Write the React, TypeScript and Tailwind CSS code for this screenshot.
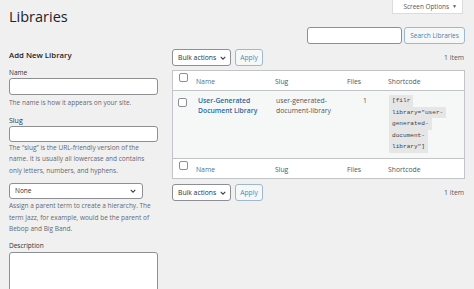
import React from "react";

function Checkbox() {
  return <div className="w-[9px] h-[9px] bg-white border border-[#8c8f94] rounded-[2px]" />;
}

function Chevron() {
  return (
    <svg width="6" height="4" viewBox="0 0 6 4" className="shrink-0">
      <path d="M0.7 0.8 L3 3.1 L5.3 0.8" fill="none" stroke="#3c434a" strokeWidth="1.1" />
    </svg>
  );
}

function BulkRow() {
  return (
    <div className="flex items-center h-[17px]">
      <div className="h-[17px] w-[59px] bg-white border border-[#8c8f94] rounded-[3px] flex items-center pl-[5px] pr-[4px] justify-between text-[#2c3338]">
        <span>Bulk actions</span>
        <Chevron />
      </div>
      <div className="ml-[4px] h-[17px] w-[28px] bg-[#f6f7f7] border border-[#9db8d0] rounded-[3px] flex items-center justify-center text-[#5b89b3]">
        Apply
      </div>
      <div className="ml-auto text-[#50575e] pr-[1px]">1 item</div>
    </div>
  );
}

function HeaderRow({ top }: { top: boolean }) {
  return (
    <div
      className={
        "grid grid-cols-[20px_79px_72px_41px_1fr] h-[20px] bg-white " +
        (top ? "border-b border-[#c3c4c7]" : "border-t border-[#c3c4c7]")
      }
    >
      <div className="pl-[6px] pt-[2px]">
        <Checkbox />
      </div>
      <div className="pl-[3px] flex items-center pt-[2px] text-[#4f6f8f]">Name</div>
      <div className="pl-[3px] flex items-center pt-[2px] text-[#50575e]">Slug</div>
      <div className="pl-[3px] flex items-center pt-[2px] text-[#50575e]">Files</div>
      <div className="pl-[3px] flex items-center pt-[2px] text-[#50575e]">Shortcode</div>
    </div>
  );
}

export default function App() {
  const code = ['[filr', 'library="user-', "generated-", "document-", 'library"]'];
  return (
    <div className="w-[474px] h-[289px] overflow-hidden relative bg-[#f0f0f1] font-['Open_Sans',sans-serif] text-[6.8px] leading-[11.5px] text-[#3c434a]">
      <div className="absolute top-0 right-[11px] w-[71px] h-[14px] bg-white border border-t-0 border-[#dcdcde] flex items-center justify-end pr-[5px] gap-[3px] text-[6.4px] text-[#50575e]">
        <span>Screen Options</span>
        <span className="text-[5px]">▼</span>
      </div>

      <div className="px-[9px]">
        <h1 className="pt-[9px] text-[14.5px] leading-[16px] text-[#1d2327] font-normal">Libraries</h1>

        <div className="flex justify-end mt-[2px] h-[17px]">
          <div className="w-[95px] h-[17px] bg-white border border-[#8c8f94] rounded-[3px]" />
          <div className="ml-[2px] w-[61px] h-[17px] bg-[#f6f7f7] border border-[#9db8d0] rounded-[3px] flex items-center justify-center text-[6.5px] text-[#4d7fab]">
            Search Libraries
          </div>
        </div>

        <div className="flex gap-[14px]">
          {/* Left column */}
          <div className="w-[149px] shrink-0 text-[6.5px]">
            <h2 className="mt-[5px] text-[7.8px] leading-[12px] font-semibold text-[#1d2327]">Add New Library</h2>

            <div className="mt-[7px] leading-[10px] text-[#2c3338]">Name</div>
            <div className="h-[17px] bg-white border border-[#8c8f94] rounded-[3px]" />
            <p className="mt-[2px] text-[#646970]">The name is how it appears on your site.</p>

            <div className="mt-[7px] leading-[10px] text-[7px] text-[#2c3338]">Slug</div>
            <div className="h-[16px] bg-white border border-[#8c8f94] rounded-[3px]" />
            <p className="text-[#646970] whitespace-nowrap">
              The “slug” is the URL-friendly version of the
              <br />
              name. It is usually all lowercase and contains
              <br />
              only letters, numbers, and hyphens.
            </p>

            <div className="mt-[7px] w-[134px] h-[16px] bg-white border border-[#8c8f94] rounded-[3px] flex items-center justify-between pl-[5px] pr-[6px] text-[#2c3338]">
              <span>None</span>
              <Chevron />
            </div>
            <p className="mt-[1px] text-[#646970] whitespace-nowrap">
              Assign a parent term to create a hierarchy. The
              <br />
              term Jazz, for example, would be the parent of
              <br />
              Bebop and Big Band.
            </p>

            <div className="mt-[6px] leading-[10px] text-[#2c3338]">Description</div>
            <div className="mt-[1px] h-[60px] bg-white border border-[#8c8f94] rounded-[3px]" />
          </div>

          {/* Right column */}
          <div className="flex-1 min-w-0">
            <div className="mt-[5px]">
              <BulkRow />
            </div>

            <div className="mt-[4px] border border-[#c3c4c7] bg-white">
              <HeaderRow top />
              <div className="grid grid-cols-[20px_79px_72px_41px_1fr] h-[67px] bg-[#f6f7f7]">
                <div className="pl-[5px] pt-[7px]">
                  <Checkbox />
                </div>
                <div className="pl-[5px] pt-[5px] leading-[10px] font-semibold text-[#2a68a0]">
                  User-Generated
                  <br />
                  Document Library
                </div>
                <div className="pl-[4px] pt-[5px] leading-[10px] text-[#50575e]">
                  user-generated-
                  <br />
                  document-library
                </div>
                <div className="pl-[19px] pt-[5px] leading-[10px] text-[#50575e]">1</div>
                <div className="pl-[4px] pt-[4px] font-['Liberation_Mono',monospace] text-[6.1px] leading-[11.5px] text-[#3c434a]">
                  {code.map((l) => (
                    <div key={l} className="w-fit bg-[#e6e6e7] px-[3px]">
                      {l}
                    </div>
                  ))}
                </div>
              </div>
              <HeaderRow top={false} />
            </div>

            <div className="mt-[5px]">
              <BulkRow />
            </div>
          </div>
        </div>
      </div>
    </div>
  );
}
